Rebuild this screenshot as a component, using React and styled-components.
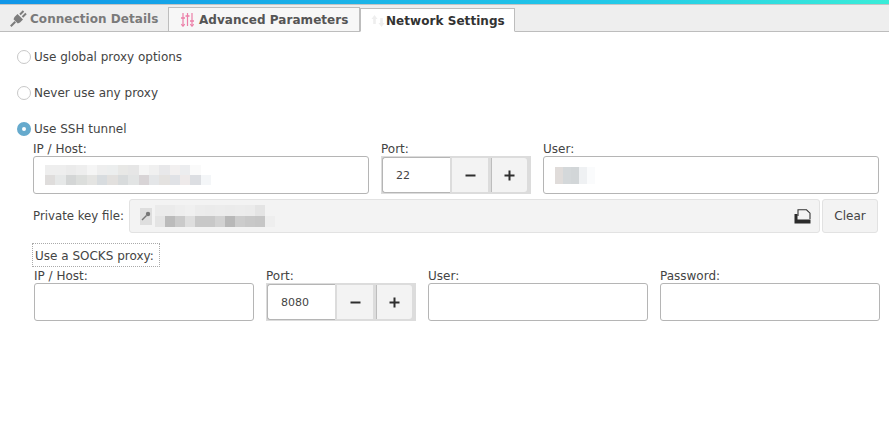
import React from 'react';
import styled, { createGlobalStyle } from 'styled-components';

const GlobalStyle = createGlobalStyle`
  html, body { margin: 0; padding: 0; background: #fff; }
  body {
    font-family: "DejaVu Sans", "Liberation Sans", sans-serif;
    font-size: 12px;
    color: #444;
    overflow: hidden;
  }
`;

const Page = styled.div`
  width: 889px;
  height: 438px;
  overflow: hidden;
`;

const AccentBar = styled.div`
  height: 4px;
  background: linear-gradient(90deg, #1096e8 0%, #22c8e8 68%, #3aecd8 100%);
`;

const TabBar = styled.div`
  display: flex;
  align-items: flex-end;
  height: 26px;
  background: #eeeeee;
  border-top: 1px solid #c4c4c4;
  border-bottom: 1px solid #bdbdbd;
`;

const Tab = styled.div`
  box-sizing: border-box;
  display: flex;
  align-items: center;
  gap: ${(p) => p.$gap}px;
  width: ${(p) => p.$width}px;
  height: ${(p) => (p.$plain ? 26 : 24)}px;
  padding: 1px 0 0 ${(p) => p.$pad}px;
  margin-bottom: ${(p) => (p.$active ? -1 : 0)}px;
  background: ${(p) => (p.$active ? '#fff' : p.$plain ? '#eeeeee' : '#f7f7f7')};
  border: ${(p) => (p.$plain ? 'none' : '1px solid #bdbdbd')};
  border-bottom: ${(p) => (p.$active ? '1px solid #fff' : 'none')};
  font-size: 12px;
  font-weight: 700;
  letter-spacing: 0.05px;
  color: ${(p) => p.$color};
  white-space: nowrap;
`;

const Form = styled.div`
  display: flex;
  flex-direction: column;
  padding-top: 13px;
`;

const RadioGroup = styled.div`
  display: flex;
  flex-direction: column;
  gap: 12px;
  margin-bottom: -1px;
`;

const RadioRow = styled.label`
  display: flex;
  align-items: center;
  gap: 3px;
  height: 24px;
  padding-left: 17px;
  font-size: 12px;
`;

const RadioDot = styled.span`
  box-sizing: border-box;
  display: block;
  width: 14px;
  height: 14px;
  border-radius: 50%;
  background: #fff;
  border: 1px solid #c8c8c8;
  ${(p) => p.$checked && `
    border: 5.5px solid #66aacd;
  `}
`;

const FieldRow = styled.div`
  display: flex;
  gap: 12px;
  width: ${(p) => p.$width}px;
  margin-left: ${(p) => p.$left}px;
`;

const Field = styled.div`
  display: flex;
  flex-direction: column;
  flex: ${(p) => p.$flex || '1 1 0'};
  min-width: 0;
`;

const FieldLabel = styled.span`
  display: block;
  height: 16px;
  line-height: 18px;
  font-size: 12px;
`;

const TextBox = styled.div`
  box-sizing: border-box;
  display: flex;
  align-items: center;
  height: 38px;
  padding-left: 11px;
  background: #fff;
  border: 1px solid #b5b5b5;
  border-radius: 3px;
`;

const Spinner = styled.div`
  box-sizing: border-box;
  display: flex;
  width: 150px;
  height: 38px;
  padding: 1px 3px 1px 1px;
  background: #dcdcdc;
`;

const SpinnerInput = styled.input`
  box-sizing: border-box;
  width: 68px;
  height: 36px;
  padding: 0 0 0 13px;
  border: 1px solid #b5b5b5;
  border-right: none;
  border-radius: 3px 0 0 3px;
  background: #fff;
  color: #444;
  font: 11px "DejaVu Sans", sans-serif;
  outline: none;
`;

const SpinnerButton = styled.button`
  box-sizing: border-box;
  display: flex;
  align-items: center;
  justify-content: center;
  width: 36px;
  height: 34px;
  margin: 1px 0 0 ${(p) => p.$gap}px;
  padding: 0;
  background: #f3f3f3;
  border: none;
  border-left: ${(p) => (p.$divided ? '1px solid #bdbdbd' : 'none')};
  border-radius: ${(p) => p.$radius};
`;

const KeyRow = styled.div`
  display: flex;
  align-items: center;
  height: 34px;
  margin: 5px 0 0 33px;
`;

const KeyLabel = styled.span`
  width: 96px;
  font-size: 11.75px;
`;

const FileBox = styled.div`
  box-sizing: border-box;
  display: flex;
  align-items: center;
  width: 691px;
  height: 34px;
  padding: 0 8px 0 10px;
  background: #f3f3f3;
  border: 1px solid #e2e2e2;
  border-radius: 3px;
`;

const KeyThumb = styled.div`
  display: flex;
  align-items: center;
  justify-content: center;
  width: 12px;
  height: 17px;
  margin-right: 3px;
  background: #dedede;
`;

const FolderSlot = styled.div`
  margin-left: auto;
  display: flex;
`;

const ClearButton = styled.button`
  box-sizing: border-box;
  width: 56px;
  height: 34px;
  margin-left: 2px;
  padding: 0;
  background: #f3f3f3;
  border: 1px solid #e2e2e2;
  border-radius: 3px;
  color: #444;
  font: 12px "DejaVu Sans", sans-serif;
`;

const SocksLegend = styled.div`
  box-sizing: border-box;
  width: 128px;
  height: 24px;
  margin: 10px 0 0 32px;
  padding-left: 2px;
  line-height: 24px;
  font-size: 12px;
  border: 1px dotted #aaa;
`;

const Mosaic = styled.div`
  display: grid;
  grid-template-columns: repeat(${(p) => p.$cols}, ${(p) => p.$cell}px);
  grid-auto-rows: ${(p) => p.$rowH}px;
`;

const Cell = styled.span`
  display: block;
  background: ${(p) => p.$c};
`;

const ipColors = [
  '#eeeeee', '#eeeeee', '#ebebeb', '#eeeeee', '#f5f5f5', '#eeeeee', '#eceeee', '#e8e8e6',
  '#e6e6e6', '#f5f5f5', '#f0f0f0', '#e8e8ea', '#f2f0f0', '#ecedef', '#fafafa', '#ffffff',
  '#dfdddc', '#e6e8e8', '#d4d6d6', '#dcdedc', '#e4e4e2', '#d8dcdf', '#e2e0de', '#d8dbdc',
  '#e2e4e4', '#d8d4d6', '#e4e6e8', '#e4e2e0', '#e0e2e6', '#eeeaea', '#dcdee2', '#f4f6f8',
];

const keyColors = [
  '#ebebeb', '#ebebeb', '#eeeeee', '#f0f0f0', '#ececec', '#ebebeb', '#ececec', '#ebebeb',
  '#ececec', '#ebebeb', '#e4e4e4', '#f3f3f3',
  '#e4e4e4', '#bbbbbb', '#cacaca', '#dedede', '#c8c8c8', '#c8c8c8', '#d2d2d2', '#b8b8b8',
  '#cccccc', '#c8c8c8', '#c6c6c6', '#eeeeee',
];

const userColors = ['#e0dcda', '#d4d8da', '#d2d6d8', '#eff1f3', '#fafbfc'];

function Blur({ colors, cols, cell, rowH }) {
  return (
    <Mosaic $cols={cols} $cell={cell} $rowH={rowH}>
      {colors.map((c, i) => <Cell key={i} $c={c} />)}
    </Mosaic>
  );
}

function PlugIcon() {
  return (
    <svg width="17" height="17" viewBox="0 0 17 17" fill="none">
      <path d="M0.8 16.2l4.5-4.5" stroke="#7d7d7d" strokeWidth="2" />
      <path d="M3.5 9.2l4.3 4.3 2.2-1 3-3-5.5-5.5-3 3z" fill="#7d7d7d" />
      <path d="M10 4.5l3.5-3.5M12.5 7l3.5-3.5" stroke="#7d7d7d" strokeWidth="2" />
    </svg>
  );
}

function SlidersIcon() {
  return (
    <svg width="13" height="14" viewBox="0 0 13 14" fill="none" stroke="#ec7fa8" strokeWidth="1.2">
      <path d="M2 0v13M6.5 0v13M11 0v13" />
      <path d="M0 5h4M4.5 3h4M9 8h4" strokeWidth="1.5" />
      <path d="M0.3 11.2l1.7 2 1.7-2M9.3 11.2l1.7 2 1.7-2" />
    </svg>
  );
}

function ArrowsIcon() {
  return (
    <svg width="14" height="12" viewBox="0 0 14 12" fill="#eeeeee">
      <path d="M3.5 0l3 4H4.8v5H2.2V4H.5z" />
      <path d="M10.5 12l-3-4h1.7V3h2.6v5h1.7z" />
    </svg>
  );
}

function KeyIcon() {
  return (
    <svg width="10" height="10" viewBox="0 0 10 10" fill="none">
      <circle cx="7" cy="3" r="2.2" fill="#777" />
      <path d="M5.5 4.5L1 9" stroke="#777" strokeWidth="1.4" />
    </svg>
  );
}

function FolderIcon() {
  return (
    <svg width="17" height="15" viewBox="0 0 17 15" fill="none">
      <path d="M4 7V0.8h8.5L16 4.2v5.8" stroke="#333" strokeWidth="1.1" />
      <path d="M0.5 5h3v5.5h13V14.5H0.5z" fill="#2b2b2b" />
    </svg>
  );
}

function Minus() {
  return (
    <svg width="11" height="11" viewBox="0 0 11 11">
      <path d="M0.5 5.5h10" stroke="#2e2e2e" strokeWidth="2" />
    </svg>
  );
}

function Plus() {
  return (
    <svg width="11" height="11" viewBox="0 0 11 11">
      <path d="M0.5 5.5h10M5.5 0.5v10" stroke="#2e2e2e" strokeWidth="2" />
    </svg>
  );
}

function PortSpinner({ value }) {
  return (
    <Spinner>
      <SpinnerInput readOnly value={value} />
      <SpinnerButton $gap={2} $radius="0"><Minus /></SpinnerButton>
      <SpinnerButton $gap={3} $divided $radius="0 3px 3px 0"><Plus /></SpinnerButton>
    </Spinner>
  );
}

export default function App() {
  return (
    <Page>
      <GlobalStyle />
      <AccentBar />
      <TabBar>
        <Tab $plain $width={168} $pad={10} $gap={3} $color="#7a7a7a">
          <PlugIcon />Connection Details
        </Tab>
        <Tab $width={192} $pad={12} $gap={5} $color="#555">
          <SlidersIcon />Advanced Parameters
        </Tab>
        <Tab $active $width={155} $pad={10} $gap={1} $color="#333">
          <ArrowsIcon />Network Settings
        </Tab>
      </TabBar>
      <Form>
        <RadioGroup>
          <RadioRow><RadioDot />Use global proxy options</RadioRow>
          <RadioRow><RadioDot />Never use any proxy</RadioRow>
          <RadioRow><RadioDot $checked />Use SSH tunnel</RadioRow>
        </RadioGroup>

        <FieldRow $width={846} $left={33}>
          <Field $flex="0 0 336px">
            <FieldLabel>IP / Host:</FieldLabel>
            <TextBox><Blur colors={ipColors} cols={16} cell={10.4} rowH={10} /></TextBox>
          </Field>
          <Field $flex="0 0 150px">
            <FieldLabel>Port:</FieldLabel>
            <PortSpinner value="22" />
          </Field>
          <Field>
            <FieldLabel>User:</FieldLabel>
            <TextBox><Blur colors={userColors} cols={5} cell={8} rowH={17} /></TextBox>
          </Field>
        </FieldRow>

        <KeyRow>
          <KeyLabel>Private key file:</KeyLabel>
          <FileBox>
            <KeyThumb><KeyIcon /></KeyThumb>
            <Blur colors={keyColors} cols={12} cell={10} rowH={11} />
            <FolderSlot><FolderIcon /></FolderSlot>
          </FileBox>
          <ClearButton>Clear</ClearButton>
        </KeyRow>

        <SocksLegend>Use a SOCKS proxy:</SocksLegend>

        <FieldRow $width={846} $left={34}>
          <Field $flex="0 0 220px">
            <FieldLabel>IP / Host:</FieldLabel>
            <TextBox />
          </Field>
          <Field $flex="0 0 150px">
            <FieldLabel>Port:</FieldLabel>
            <PortSpinner value="8080" />
          </Field>
          <Field $flex="0 0 220px">
            <FieldLabel>User:</FieldLabel>
            <TextBox />
          </Field>
          <Field $flex="0 0 220px">
            <FieldLabel>Password:</FieldLabel>
            <TextBox />
          </Field>
        </FieldRow>
      </Form>
    </Page>
  );
}
